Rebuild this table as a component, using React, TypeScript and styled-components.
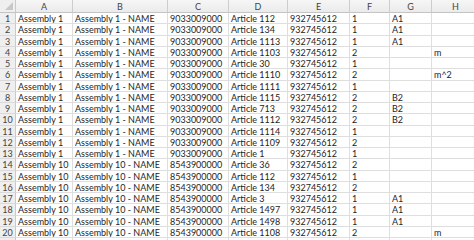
import styled, { createGlobalStyle } from "styled-components";

const GlobalStyle = createGlobalStyle`
  html, body {
    margin: 0;
    padding: 0;
    background: #ffffff;
    overflow: hidden;
  }
`;

const COLUMNS = ["A", "B", "C", "D", "E", "F", "G", "H"];
// row header + A..H
const WIDTHS = [16, 57, 95, 61, 59, 62, 40, 42, 48];

type Row = [string, string, string, string, string, string, string, string];

const a1 = "Assembly 1";
const a1n = "Assembly 1 - NAME";
const a10 = "Assembly 10";
const a10n = "Assembly 10 - NAME";
const c1 = "9033009000";
const c10 = "8543900000";
const e = "932745612";

const rows: Row[] = [
  [a1, a1n, c1, "Article 112", e, "1", "A1", ""],
  [a1, a1n, c1, "Article 134", e, "1", "A1", ""],
  [a1, a1n, c1, "Article 1113", e, "1", "A1", ""],
  [a1, a1n, c1, "Article 1103", e, "2", "", "m"],
  [a1, a1n, c1, "Article 30", e, "1", "", ""],
  [a1, a1n, c1, "Article 1110", e, "2", "", "m^2"],
  [a1, a1n, c1, "Article 1111", e, "1", "", ""],
  [a1, a1n, c1, "Article 1115", e, "2", "B2", ""],
  [a1, a1n, c1, "Article 713", e, "2", "B2", ""],
  [a1, a1n, c1, "Article 1112", e, "2", "B2", ""],
  [a1, a1n, c1, "Article 1114", e, "1", "", ""],
  [a1, a1n, c1, "Article 1109", e, "2", "", ""],
  [a1, a1n, c1, "Article 1", e, "1", "", ""],
  [a10, a10n, c10, "Article 36", e, "2", "", ""],
  [a10, a10n, c10, "Article 112", e, "1", "", ""],
  [a10, a10n, c10, "Article 134", e, "2", "", ""],
  [a10, a10n, c10, "Article 3", e, "1", "A1", ""],
  [a10, a10n, c10, "Article 1497", e, "1", "A1", ""],
  [a10, a10n, c10, "Article 1498", e, "1", "A1", ""],
  [a10, a10n, c10, "Article 1108", e, "2", "", "m"],
];

const App = () => {
  return (
    <>
      <GlobalStyle />
      <Sheet>
        <Corner>
          <CornerMark />
        </Corner>
        {COLUMNS.map((c) => (
          <ColumnHeader key={c}>{c}</ColumnHeader>
        ))}
        {rows.map((row, i) => (
          <RowGroup key={i}>
            <RowHeader>{i + 1}</RowHeader>
            {row.map((cell, j) => (
              <Cell key={j}>{cell}</Cell>
            ))}
          </RowGroup>
        ))}
        <RowGroup>
          <RowHeader />
          {COLUMNS.map((c) => (
            <Cell key={c} />
          ))}
        </RowGroup>
      </Sheet>
    </>
  );
};

export default App;

const Sheet = styled.div`
  display: grid;
  grid-template-columns: ${WIDTHS.map((w) => `${w}px`).join(" ")};
  grid-template-rows: 13px repeat(21, 11.25px);
  width: 474px;
  height: 240px;
  overflow: hidden;
  font-family: Lato, "Open Sans", "Liberation Sans", sans-serif;
  font-size: 9px;
  color: #1e1e1e;
`;

const RowGroup = styled.div`
  display: contents;
`;

const Corner = styled.div`
  position: relative;
  background: #efefef;
  border-right: 1px solid #c9c9c9;
  border-bottom: 1px solid #c4c4c4;
`;

const CornerMark = styled.div`
  position: absolute;
  right: 2px;
  bottom: 2px;
  width: 0;
  height: 0;
  border-left: 8px solid transparent;
  border-bottom: 8px solid #c8c8c8;
`;

const ColumnHeader = styled.div`
  background: linear-gradient(#f6f6f6, #ebebeb);
  border-right: 1px solid #cdcdcd;
  border-bottom: 1px solid #c4c4c4;
  color: #444;
  text-align: center;
  line-height: 13px;
  font-size: 9px;
`;

const RowHeader = styled.div`
  background: #efefef;
  border-right: 1px solid #c9c9c9;
  border-bottom: 1px solid #dadada;
  color: #444;
  text-align: center;
  line-height: 11px;
  font-size: 9px;
  overflow: hidden;
`;

const Cell = styled.div`
  border-right: 1px solid #dedede;
  border-bottom: 1px solid #dedede;
  padding-left: 2px;
  line-height: 11px;
  white-space: nowrap;
  overflow: hidden;
`;
